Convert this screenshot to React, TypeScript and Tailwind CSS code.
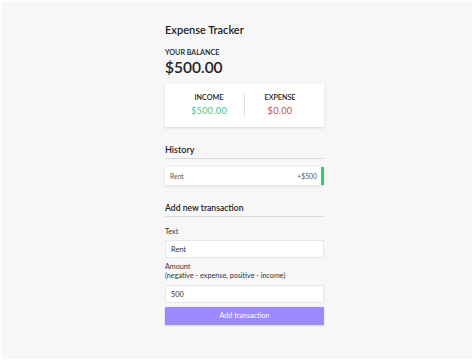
import React from 'react';

export default function App() {
  return (
    <div className="w-[474px] h-[361px] bg-white p-[2px] font-['Lato','Noto_Sans',sans-serif] text-[#222]">
      <div className="h-full bg-[#f7f7f7] flex">
        <div className="w-[159px] ml-[163px] pt-[20px]">
          {/* Title */}
          <h2 className="text-[11px] leading-[16px] font-semibold">Expense Tracker</h2>

          {/* Balance */}
          <h4 className="mt-[10px] text-[7.2px] leading-[10px] font-semibold uppercase">Your Balance</h4>
          <h1 className="text-[15.5px] leading-[19px] font-semibold">$500.00</h1>

          {/* Income / Expense */}
          <div className="mt-[7px] bg-white shadow-[0_1px_3px_rgba(0,0,0,0.12)] px-[9px] pt-[9px] pb-[10px] flex">
            <div className="flex-1 text-center border-r border-[#e2e2e2]">
              <h4 className="text-[7.2px] leading-[10px] font-semibold uppercase">Income</h4>
              <p className="mt-[1px] text-[9.2px] leading-[13px] text-[#4cc583] tracking-[0.3px]">$500.00</p>
            </div>
            <div className="flex-1 text-center">
              <h4 className="text-[7.2px] leading-[10px] font-semibold uppercase">Expense</h4>
              <p className="mt-[1px] text-[9.2px] leading-[13px] text-[#c24c44] tracking-[0.3px]">$0.00</p>
            </div>
          </div>

          {/* History */}
          <h3 className="mt-[17px] text-[9px] leading-[12px] font-semibold pb-[2px] border-b border-[#dcdcdc]">History</h3>
          <ul className="mt-[8px]">
            <li className="h-[18px] bg-white shadow-[0_1px_3px_rgba(0,0,0,0.12)] border-r-[3px] border-[#2ecc71] flex items-center justify-between pl-[5px] pr-[4px] text-[6.8px] text-[#555]">
              <span>Rent</span>
              <span>+$500</span>
            </li>
          </ul>

          {/* Add new transaction */}
          <h3 className="mt-[17px] text-[8.6px] leading-[12px] font-semibold pb-[2px] border-b border-[#dcdcdc]">Add new transaction</h3>
          <form onSubmit={(e) => e.preventDefault()}>
            <label className="block mt-[10px] text-[7.2px] leading-[10px] text-[#333]">Text</label>
            <input
              type="text"
              defaultValue="Rent"
              className="mt-[3px] block w-full h-[18px] bg-white border border-[#e6e6e6] px-[5px] text-[7.4px] text-[#333] outline-none"
            />
            <label className="block mt-[4px] text-[7.2px] leading-[9px] text-[#333]">
              Amount
              <br />
              (negative - expense, positive - income)
            </label>
            <input
              type="number"
              defaultValue="500"
              className="mt-[5px] block w-full h-[18px] bg-white border border-[#e6e6e6] px-[5px] text-[7.4px] text-[#333] outline-none"
            />
            <button className="mt-[4px] block w-full h-[18px] bg-[#9c88ff] text-white text-[7.2px] shadow-[0_1px_2px_rgba(0,0,0,0.15)]">
              Add transaction
            </button>
          </form>
        </div>
      </div>
    </div>
  );
}
